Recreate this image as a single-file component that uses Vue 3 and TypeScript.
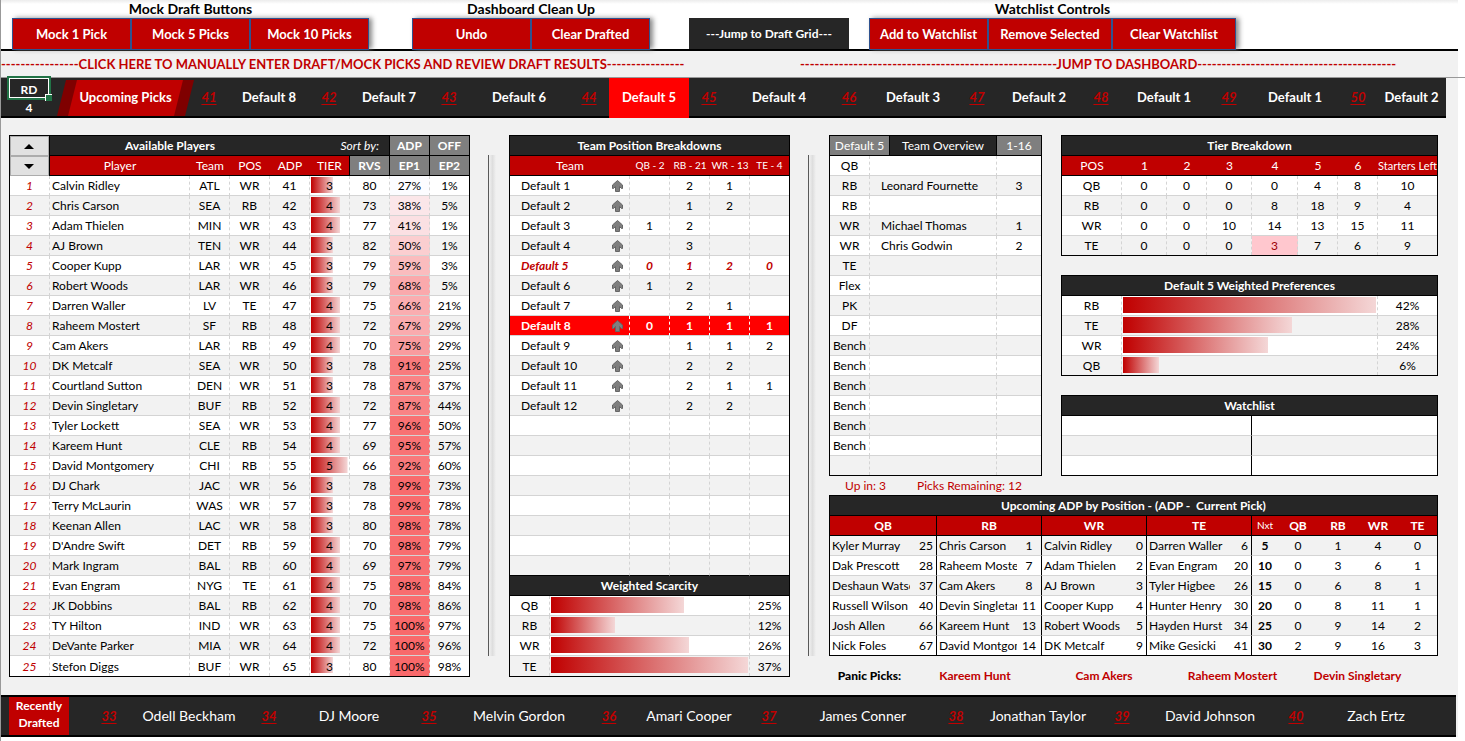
<script setup lang="ts">
import { computed, ref } from 'vue'

interface Player {
  name: string
  team: string
  pos: string
  tier: number
  rvs: number
  ep1: number
  ep2: number
}

interface Slot {
  label: string
  width: number
  kind: 'pick' | 'team' | 'gap'
  active?: boolean
}

interface Share {
  pos: string
  value: number
}

const p = (name: string, team: string, pos: string, tier: number, rvs: number, ep1: number, ep2: number): Player => ({
  name, team, pos, tier, rvs, ep1, ep2,
})

const firstAdp = 41
const players: Player[] = [
  p('Calvin Ridley', 'ATL', 'WR', 3, 80, 27, 1),
  p('Chris Carson', 'SEA', 'RB', 4, 73, 38, 5),
  p('Adam Thielen', 'MIN', 'WR', 4, 77, 41, 1),
  p('AJ Brown', 'TEN', 'WR', 3, 82, 50, 1),
  p('Cooper Kupp', 'LAR', 'WR', 3, 79, 59, 3),
  p('Robert Woods', 'LAR', 'WR', 3, 79, 68, 5),
  p('Darren Waller', 'LV', 'TE', 4, 75, 66, 21),
  p('Raheem Mostert', 'SF', 'RB', 4, 72, 67, 29),
  p('Cam Akers', 'LAR', 'RB', 4, 70, 75, 29),
  p('DK Metcalf', 'SEA', 'WR', 3, 78, 91, 25),
  p('Courtland Sutton', 'DEN', 'WR', 3, 78, 87, 37),
  p('Devin Singletary', 'BUF', 'RB', 4, 72, 87, 44),
  p('Tyler Lockett', 'SEA', 'WR', 4, 77, 96, 50),
  p('Kareem Hunt', 'CLE', 'RB', 4, 69, 95, 57),
  p('David Montgomery', 'CHI', 'RB', 5, 66, 92, 60),
  p('DJ Chark', 'JAC', 'WR', 3, 78, 99, 73),
  p('Terry McLaurin', 'WAS', 'WR', 3, 78, 99, 78),
  p('Keenan Allen', 'LAC', 'WR', 3, 80, 98, 78),
  p("D'Andre Swift", 'DET', 'RB', 4, 70, 98, 79),
  p('Mark Ingram', 'BAL', 'RB', 4, 69, 97, 79),
  p('Evan Engram', 'NYG', 'TE', 4, 75, 98, 84),
  p('JK Dobbins', 'BAL', 'RB', 4, 70, 98, 86),
  p('TY Hilton', 'IND', 'WR', 4, 75, 100, 97),
  p('DeVante Parker', 'MIA', 'WR', 4, 72, 100, 96),
  p('Stefon Diggs', 'BUF', 'WR', 3, 80, 100, 98),
]

const heat = (v: number): string => {
  const t = (v - 27) / 73
  const mix = (a: number, b: number) => Math.round(a + (b - a) * t)
  return `rgb(${mix(252, 248)}, ${mix(252, 105)}, ${mix(255, 107)})`
}

const breakdown: (string | number)[][] = [
  ['Default 1', '', 2, 1, ''],
  ['Default 2', '', 1, 2, ''],
  ['Default 3', 1, 2, '', ''],
  ['Default 4', '', 3, '', ''],
  ['Default 5', 0, 1, 2, 0],
  ['Default 6', 1, 2, '', ''],
  ['Default 7', '', 2, 1, ''],
  ['Default 8', 0, 1, 1, 1],
  ['Default 9', '', 1, 1, 2],
  ['Default 10', '', 2, 2, ''],
  ['Default 11', '', 2, 1, 1],
  ['Default 12', '', 2, 2, ''],
]
const onClock = ref('Default 5')
const selected = ref('Default 8')
const rowState = (name: string | number) => ({
  clock: name === onClock.value,
  selected: name === selected.value,
})

const scarcity: Share[] = [
  { pos: 'QB', value: 25 },
  { pos: 'RB', value: 12 },
  { pos: 'WR', value: 26 },
  { pos: 'TE', value: 37 },
]
const preferences: Share[] = [
  { pos: 'RB', value: 42 },
  { pos: 'TE', value: 28 },
  { pos: 'WR', value: 24 },
  { pos: 'QB', value: 6 },
]
const share = (list: Share[], v: number) => `${(v / Math.max(...list.map((s) => s.value))) * 100}%`

const roster: string[][] = [
  ['QB', '', ''],
  ['RB', 'Leonard Fournette', '3'],
  ['RB', '', ''],
  ['WR', 'Michael Thomas', '1'],
  ['WR', 'Chris Godwin', '2'],
  ['TE', '', ''],
  ['Flex', '', ''],
  ['PK', '', ''],
  ['DF', '', ''],
  ...Array.from({ length: 6 }, () => ['Bench', '', '']),
  ['', '', ''],
]

const tiers: (string | number)[][] = [
  ['QB', 0, 0, 0, 0, 4, 8, 10],
  ['RB', 0, 0, 0, 8, 18, 9, 4],
  ['WR', 0, 0, 10, 14, 13, 15, 11],
  ['TE', 0, 0, 0, 3, 7, 6, 9],
]

const upcoming: (string | number)[][] = [
  ['Kyler Murray', 25, 'Chris Carson', 1, 'Calvin Ridley', 0, 'Darren Waller', 6, 5, 0, 1, 4, 0],
  ['Dak Prescott', 28, 'Raheem Mostert', 7, 'Adam Thielen', 2, 'Evan Engram', 20, 10, 0, 3, 6, 1],
  ['Deshaun Watson', 37, 'Cam Akers', 8, 'AJ Brown', 3, 'Tyler Higbee', 26, 15, 0, 6, 8, 1],
  ['Russell Wilson', 40, 'Devin Singletary', 11, 'Cooper Kupp', 4, 'Hunter Henry', 30, 20, 0, 8, 11, 1],
  ['Josh Allen', 66, 'Kareem Hunt', 13, 'Robert Woods', 5, 'Hayden Hurst', 34, 25, 0, 9, 14, 2],
  ['Nick Foles', 67, 'David Montgomery', 14, 'DK Metcalf', 9, 'Mike Gesicki', 41, 30, 2, 9, 16, 3],
]
const adpClass = (i: number) => ({
  left: i < 8 && i % 2 === 0,
  num: i < 8 && i % 2 === 1 && i !== 3,
  edge: i < 8 && i % 2 === 1,
  nxt: i === 8,
})

const s = (label: string, width: number, kind: Slot['kind'], active = false): Slot => ({ label, width, kind, active })
const nextPicks: Slot[] = [
  s('41', 40, 'pick'), s('Default 8', 80, 'team'),
  s('42', 40, 'pick'), s('Default 7', 80, 'team'),
  s('43', 40, 'pick'), s('Default 6', 100, 'team'),
  s('44', 40, 'pick'), s('Default 5', 80, 'team', true),
  s('45', 40, 'pick'), s('Default 4', 100, 'team'),
  s('46', 40, 'pick'), s('Default 3', 88, 'team'),
  s('47', 40, 'pick'), s('Default 2', 84, 'team'),
  s('48', 40, 'pick'), s('Default 1', 86, 'team'),
  s('49', 44, 'pick'), s('Default 1', 88, 'team'),
  s('50', 38, 'pick'), s('Default 2', 69, 'team'),
]
const drafted: Slot[] = [
  s('', 20, 'gap'),
  s('33', 40, 'pick'), s('Odell Beckham', 120, 'team'),
  s('34', 40, 'pick'), s('DJ Moore', 120, 'team'),
  s('35', 40, 'pick'), s('Melvin Gordon', 140, 'team'),
  s('36', 40, 'pick'), s('Amari Cooper', 120, 'team'),
  s('37', 40, 'pick'), s('James Conner', 148, 'team'),
  s('38', 38, 'pick'), s('Jonathan Taylor', 126, 'team'),
  s('39', 42, 'pick'), s('David Johnson', 134, 'team'),
  s('40', 38, 'pick'), s('Zach Ertz', 122, 'team'),
  s('', 19, 'gap'),
]
const tracks = (slots: Slot[]) => slots.map((x) => `minmax(0, ${x.width}fr)`).join(' ')
const nextTracks = computed(() => tracks(nextPicks))
const draftedTracks = computed(() => tracks(drafted))

const cols = (widths: number[]) => {
  const total = widths.reduce((a, b) => a + b, 0)
  return widths.map((w) => `${(w / total) * 100}%`)
}
const playerCols = cols([40, 140, 40, 40, 40, 40, 40, 40, 39])
const teamCols = cols([95, 25, 40, 40, 40, 39])
const scarcityCols = cols([40, 200, 39])
const rosterCols = cols([40, 20, 107, 44])
const tierCols = cols([60, 45, 40, 45, 46, 40, 40, 59])
const prefCols = cols([60, 256, 59])
const watchCols = cols([190, 185])
const adpCols = cols([80, 27, 80, 25, 85, 20, 80, 25, 26, 40, 40, 40, 39])

const leftDashes = '-'.repeat(16)
const jumpLead = '-'.repeat(53)
const jumpTail = '-'.repeat(41)
</script>

<template>
  <div class="page">
    <header class="toolbar">
      <section class="group mock">
        <h2>Mock Draft Buttons</h2>
        <div class="buttons">
          <button type="button">Mock 1 Pick</button>
          <button type="button">Mock 5 Picks</button>
          <button type="button">Mock 10 Picks</button>
        </div>
      </section>
      <section class="group cleanup">
        <h2>Dashboard Clean Up</h2>
        <div class="buttons">
          <button type="button">Undo</button>
          <button type="button">Clear Drafted</button>
        </div>
      </section>
      <button type="button" class="jump">---Jump to Draft Grid---</button>
      <section class="group watch">
        <h2>Watchlist Controls</h2>
        <div class="buttons">
          <button type="button">Add to Watchlist</button>
          <button type="button">Remove Selected</button>
          <button type="button">Clear Watchlist</button>
        </div>
      </section>
    </header>

    <div class="sheet">
      <nav class="jumps">
        <a href="#draft">{{ leftDashes }}CLICK HERE TO MANUALLY ENTER DRAFT/MOCK PICKS AND REVIEW DRAFT RESULTS{{ leftDashes }}</a>
        <a href="#dashboard">{{ jumpLead }}JUMP TO DASHBOARD{{ jumpTail }}</a>
      </nav>

      <div class="freeze"></div>

      <section class="next">
        <div class="round">
          <span class="cursor">RD</span>
          <span class="number">4</span>
        </div>
        <h2 class="ribbon">
          <svg viewBox="0 0 137 36" preserveAspectRatio="none" aria-hidden="true">
            <polygon points="9,0 137,0 128,36 0,36" fill="#7f0000" />
            <polygon points="20,0 126,0 117,36 11,36" fill="#c00000" />
          </svg>
          <span>Upcoming Picks</span>
        </h2>
        <div class="slots" :style="{ gridTemplateColumns: nextTracks }">
          <template v-for="(slot, i) in nextPicks" :key="i">
            <a v-if="slot.kind === 'pick'" href="#draft" class="pick">{{ slot.label }}</a>
            <span v-else class="team" :class="{ active: slot.active }">{{ slot.label }}</span>
          </template>
        </div>
      </section>

      <main class="board">
        <table class="grid players">
          <colgroup><col v-for="(w, i) in playerCols" :key="i" :style="{ width: w }" /></colgroup>
          <thead>
            <tr class="title">
              <th class="spin">
                <button type="button" aria-label="Previous players">
                  <svg viewBox="0 0 10 5" aria-hidden="true"><polygon points="5,0 10,5 0,5" /></svg>
                </button>
              </th>
              <th colspan="4" class="name">Available Players</th>
              <th colspan="2" class="sortby">Sort by:</th>
              <th class="sort"><button type="button">ADP</button></th>
              <th class="sort"><button type="button">OFF</button></th>
            </tr>
            <tr class="heads">
              <th class="spin">
                <button type="button" aria-label="Next players">
                  <svg viewBox="0 0 10 5" aria-hidden="true"><polygon points="0,0 10,0 5,5" /></svg>
                </button>
              </th>
              <th>Player</th>
              <th>Team</th>
              <th>POS</th>
              <th>ADP</th>
              <th class="edge">TIER</th>
              <th class="sort"><button type="button">RVS</button></th>
              <th class="sort"><button type="button">EP1</button></th>
              <th class="sort"><button type="button">EP2</button></th>
            </tr>
          </thead>
          <tbody>
            <tr v-for="(row, i) in players" :key="row.name">
              <td class="rank">{{ i + 1 }}</td>
              <td class="left">{{ row.name }}</td>
              <td>{{ row.team }}</td>
              <td>{{ row.pos }}</td>
              <td>{{ firstAdp + i }}</td>
              <td class="tier" :style="{ backgroundSize: `${row.tier * 18.75}% 16px` }">{{ row.tier }}</td>
              <td>{{ row.rvs }}</td>
              <td class="heat" :style="{ backgroundColor: heat(row.ep1) }">{{ row.ep1 }}%</td>
              <td>{{ row.ep2 }}%</td>
            </tr>
          </tbody>
        </table>

        <div class="divider"></div>

        <div class="middle">
          <table class="grid teams">
            <colgroup><col v-for="(w, i) in teamCols" :key="i" :style="{ width: w }" /></colgroup>
            <thead>
              <tr class="title"><th colspan="6">Team Position Breakdowns</th></tr>
              <tr class="heads small">
                <th colspan="2" class="normal">Team</th>
                <th>QB - 2</th>
                <th>RB - 21</th>
                <th>WR - 13</th>
                <th>TE - 4</th>
              </tr>
            </thead>
            <tbody>
              <tr v-for="row in breakdown" :key="row[0]" :class="rowState(row[0])">
                <td class="left open">{{ row[0] }}</td>
                <td class="icon">
                  <svg viewBox="0 0 11 12" aria-hidden="true">
                    <path d="M5.5 0.5 L10.5 5 V8.5 H9.5 L7.5 6.5 V11.5 H3.5 V6.5 L1.5 8.5 H0.5 V5 Z" fill="#7f7f7f" stroke="#666" stroke-width="1" />
                  </svg>
                </td>
                <td>{{ row[1] }}</td>
                <td>{{ row[2] }}</td>
                <td>{{ row[3] }}</td>
                <td>{{ row[4] }}</td>
              </tr>
              <tr v-for="n in 8" :key="n">
                <td class="open"></td><td></td><td></td><td></td><td></td><td></td>
              </tr>
            </tbody>
          </table>
          <table class="grid scarcity">
            <colgroup><col v-for="(w, i) in scarcityCols" :key="i" :style="{ width: w }" /></colgroup>
            <thead><tr class="title"><th colspan="3">Weighted Scarcity</th></tr></thead>
            <tbody>
              <tr v-for="row in scarcity" :key="row.pos">
                <td>{{ row.pos }}</td>
                <td class="barcell"><div class="bar" :style="{ width: share(scarcity, row.value) }"></div></td>
                <td>{{ row.value }}%</td>
              </tr>
            </tbody>
          </table>
        </div>

        <div class="divider"></div>

        <div class="right">
          <div class="roster">
            <table class="grid">
              <colgroup><col v-for="(w, i) in rosterCols" :key="i" :style="{ width: w }" /></colgroup>
              <thead>
                <tr class="title light">
                  <th colspan="2" class="grey edge">Default 5</th>
                  <th class="edge">Team Overview</th>
                  <th class="grey">1-16</th>
                </tr>
              </thead>
              <tbody>
                <tr v-for="(row, i) in roster" :key="i">
                  <td>{{ row[0] }}</td>
                  <td colspan="2" class="left wide">{{ row[1] }}</td>
                  <td>{{ row[2] }}</td>
                </tr>
              </tbody>
            </table>
            <p class="status"><span>Up in: 3</span><span>Picks Remaining: 12</span></p>
          </div>

          <div class="stack">
            <table class="grid">
              <colgroup><col v-for="(w, i) in tierCols" :key="i" :style="{ width: w }" /></colgroup>
              <thead>
                <tr class="title"><th colspan="8">Tier Breakdown</th></tr>
                <tr class="heads">
                  <th>POS</th>
                  <th v-for="n in 6" :key="n">{{ n }}</th>
                  <th class="compact">Starters Left</th>
                </tr>
              </thead>
              <tbody>
                <tr v-for="row in tiers" :key="row[0]">
                  <td v-for="(cell, i) in row" :key="i" :class="{ alert: cell === 3 }">{{ cell }}</td>
                </tr>
              </tbody>
            </table>

            <table class="grid">
              <colgroup><col v-for="(w, i) in prefCols" :key="i" :style="{ width: w }" /></colgroup>
              <thead><tr class="title"><th colspan="3">Default 5 Weighted Preferences</th></tr></thead>
              <tbody>
                <tr v-for="row in preferences" :key="row.pos">
                  <td>{{ row.pos }}</td>
                  <td class="barcell"><div class="bar" :style="{ width: share(preferences, row.value) }"></div></td>
                  <td>{{ row.value }}%</td>
                </tr>
              </tbody>
            </table>

            <table class="grid watchlist">
              <colgroup><col v-for="(w, i) in watchCols" :key="i" :style="{ width: w }" /></colgroup>
              <thead><tr class="title"><th colspan="2">Watchlist</th></tr></thead>
              <tbody>
                <tr v-for="n in 3" :key="n"><td></td><td></td></tr>
              </tbody>
            </table>
          </div>

          <div class="adp">
            <table class="grid">
              <colgroup><col v-for="(w, i) in adpCols" :key="i" :style="{ width: w }" /></colgroup>
              <thead>
                <tr class="title"><th colspan="13">Upcoming ADP by Position - (ADP -&nbsp; Current Pick)</th></tr>
                <tr class="heads strong">
                  <th colspan="2" class="edge">QB</th>
                  <th colspan="2" class="edge">RB</th>
                  <th colspan="2" class="edge">WR</th>
                  <th colspan="2" class="edge">TE</th>
                  <th class="tiny">Nxt</th>
                  <th>QB</th>
                  <th>RB</th>
                  <th>WR</th>
                  <th>TE</th>
                </tr>
              </thead>
              <tbody>
                <tr v-for="row in upcoming" :key="row[0]">
                  <td v-for="(cell, i) in row" :key="i" :class="adpClass(i)">{{ cell }}</td>
                </tr>
              </tbody>
            </table>
            <div class="panic">
              <strong>Panic Picks:</strong>
              <span>Kareem Hunt</span>
              <span>Cam Akers</span>
              <span>Raheem Mostert</span>
              <span>Devin Singletary</span>
            </div>
          </div>
        </div>
      </main>

      <footer class="recent">
        <h2>Recently Drafted</h2>
        <div class="slots" :style="{ gridTemplateColumns: draftedTracks }">
          <template v-for="(slot, i) in drafted" :key="i">
            <a v-if="slot.kind === 'pick'" href="#draft" class="pick">{{ slot.label }}</a>
            <span v-else class="team">{{ slot.label }}</span>
          </template>
        </div>
      </footer>
    </div>
  </div>
</template>

<style>
body {
  margin: 0;
  background: #fff;
}
</style>

<style scoped>
.page {
  box-sizing: border-box;
  min-height: 100vh;
  font-family: Lato, 'Open Sans', sans-serif;
  font-size: 12px;
  color: #000;
  border-left: 1px solid #999;
  padding-right: 7px;
}

.page * {
  box-sizing: border-box;
}

h2,
p {
  margin: 0;
}

button {
  font-family: inherit;
  cursor: pointer;
}

/* Toolbar */
.toolbar {
  display: grid;
  grid-template-columns: 11fr 357fr 43fr 238fr 39fr 160fr 20fr 367fr 222fr;
  align-items: end;
  border-bottom: 2px solid #000;
  background: linear-gradient(#ececec, #fff 4px);
}

.group h2 {
  height: 18px;
  font-size: 14px;
  line-height: 18px;
  text-align: center;
}

.mock {
  grid-column: 2;
}

.cleanup {
  grid-column: 4;
}

.watch {
  grid-column: 8;
}

.buttons {
  display: flex;
  box-shadow: 3px 0 5px #888;
}

.buttons button {
  flex: 1 1 0;
  height: 32px;
  margin-bottom: -1px;
  padding: 0;
  border: 1px solid #2f528f;
  background: #c00000;
  color: #fff;
  font-size: 13px;
  font-weight: 700;
}

.watch button {
  flex-grow: 124;
}

.watch button:first-child {
  flex-grow: 119;
}

.jump {
  grid-column: 6;
  height: 31px;
  padding: 0;
  border: 0;
  background: #262626;
  color: #fff;
  font-size: 12px;
  font-weight: 700;
}

/* Sheet */
.sheet {
  background: #f1f1f1;
}

.jumps {
  display: grid;
  grid-template-columns: 799fr 658fr;
  height: 26px;
}

.jumps a {
  color: #c00000;
  font-size: 13px;
  font-weight: 700;
  line-height: 26px;
  text-decoration: none;
  white-space: nowrap;
}

.freeze {
  height: 1px;
  margin-right: -7px;
  background: #999;
}

.next {
  display: grid;
  grid-template-columns: 8fr 40fr 8fr 132fr 1257fr;
  margin-right: 12px;
  height: 40px;
  background: #262626;
  border-bottom: 2px solid #000;
}

.round {
  grid-column: 2;
  display: flex;
  flex-direction: column;
  color: #fff;
  font-size: 12px;
  font-weight: 700;
  text-align: center;
}

.cursor {
  position: relative;
  height: 20px;
  line-height: 18px;
  padding-top: 2px;
  border: 1px solid #fff;
  outline: 2px solid #217346;
}

.cursor::after {
  content: '';
  position: absolute;
  right: -4px;
  bottom: -4px;
  width: 6px;
  height: 6px;
  background: #217346;
  border-top: 1px solid #fff;
  border-left: 1px solid #fff;
}

.number {
  line-height: 20px;
}

.ribbon {
  grid-column: 4;
  display: grid;
  margin-right: -5px;
  color: #fff;
  font-size: 13px;
  text-align: center;
}

.ribbon svg {
  grid-area: 1 / 1;
  width: 100%;
  height: 36px;
  margin-top: 2px;
}

.ribbon span {
  grid-area: 1 / 1;
  z-index: 1;
  line-height: 38px;
}

.slots {
  display: grid;
  text-align: center;
  white-space: nowrap;
  line-height: 38px;
}

.pick {
  color: #c00000;
  font-size: 13px;
  font-style: italic;
  font-weight: 700;
  text-underline-offset: 2px;
}

.team {
  color: #fff;
  font-size: 14px;
}

.next .team {
  font-size: 13px;
  font-weight: 700;
}

.team.active {
  background: #f00;
}

/* Board */
.board {
  display: grid;
  grid-template-columns: 461fr 39fr 281fr 39fr 609fr;
  align-items: start;
  padding: 17px 20px 10px 8px;
}

.divider {
  align-self: start;
  width: 8px;
  height: 501px;
  margin: 20px 0 0 18px;
  border-left: 1px solid #595959;
  background: linear-gradient(90deg, #f1f1f1, #dedede 50%, #f1f1f1);
}

/* Tables */
.grid {
  width: 100%;
  table-layout: fixed;
  border-collapse: separate;
  border-spacing: 0;
  border: 1px solid #000;
  background: #fff;
}

.grid tr {
  height: 20px;
}

.grid th,
.grid td {
  height: 20px;
  padding: 0;
  overflow: hidden;
  border-bottom: 1px solid #d4d4d4;
  line-height: 19px;
  text-align: center;
  white-space: nowrap;
}

.grid td {
  border-right: 1px dashed #d4d4d4;
}

.grid td:last-child {
  border-right: 0;
}

.grid tbody tr:last-child td {
  border-bottom: 0;
}

.grid tbody tr:nth-child(even) {
  background: #f2f2f2;
}

.grid .left {
  padding-left: 2px;
  text-align: left;
}

.grid .open {
  border-right: 0;
}

.grid th {
  border-bottom-color: #000;
  color: #fff;
}

.title th {
  background: #262626;
  font-weight: 700;
}

.title.light th {
  font-weight: 400;
}

.heads th {
  background: #c00000;
  font-weight: 400;
}

.heads.small th {
  font-size: 10px;
}

.heads.small th.normal {
  font-size: 12px;
}

.heads.strong th {
  font-weight: 700;
}

.heads th.compact {
  font-size: 11px;
}

.heads th.tiny {
  font-size: 10px;
  font-weight: 400;
}

.grid th.grey {
  background: #7f7f7f;
}

.grid .edge {
  border-right: 1px solid #000;
}

.grid th.spin {
  border-right: 1px solid #000;
  border-bottom: 0;
  background: #e1e1e1;
}

.spin button {
  display: block;
  width: 100%;
  height: 20px;
  padding: 0;
  border: 1px solid #acacac;
  background: #e1e1e1;
}

.spin svg {
  display: block;
  width: 10px;
  height: 5px;
  margin: 0 auto;
}

.grid th.name {
  padding-right: 20px;
}

.grid th.sortby {
  padding-right: 10px;
  border-right: 1px solid #000;
  font-style: italic;
  font-weight: 400;
  text-align: right;
}

.grid th.sort {
  border-right: 1px solid #000;
  background: #7f7f7f;
}

.grid th.sort:last-child {
  border-right: 0;
}

.sort button {
  display: block;
  width: 100%;
  height: 19px;
  padding: 0;
  border: 0;
  background: #7f7f7f;
  color: #fff;
  font-size: 12px;
  font-weight: 700;
}

.rank {
  color: #c00000;
  font-style: italic;
}

.tier {
  background-image: linear-gradient(90deg, #c00000, #f4d7d7);
  background-repeat: no-repeat;
  background-position: 1px 1px;
}

.teams {
  border-bottom: 0;
}

.teams .left {
  padding-left: 11px;
}

.teams .icon svg {
  display: block;
  width: 11px;
  height: 12px;
  margin: 0 auto;
}

.teams tbody tr.clock td {
  color: #c00000;
  font-style: italic;
  font-weight: 700;
}

.teams tbody tr.selected td {
  background: #f00;
  border-right-color: #fff;
  color: #fff;
  font-weight: 700;
}

.teams tbody tr:last-child td {
  border-bottom: 1px solid #000;
}

.scarcity {
  border-top: 0;
}

.barcell .bar {
  height: 16px;
  background: linear-gradient(90deg, #c00000, #f4d7d7);
}

.grid .barcell {
  padding: 1px 1px 0;
  vertical-align: top;
}

.right {
  display: grid;
  grid-template-columns: 213fr 19fr 377fr;
}

.right tbody tr:last-child,
.right tbody tr:last-child td {
  height: 19px;
}

.stack {
  grid-column: 3;
  display: flex;
  flex-direction: column;
  gap: 19px;
}

.grid .wide {
  padding-left: 11px;
}

.alert {
  background: #ffc7ce;
  color: #9c0006;
}

.watchlist td:first-child {
  border-right: 1px solid #000;
}

.status {
  display: flex;
  gap: 31px;
  height: 19px;
  padding-left: 16px;
  color: #c00000;
  line-height: 20px;
  white-space: nowrap;
}

.adp {
  grid-column: 1 / -1;
}

.adp td {
  border-right: 0;
}

.adp tbody tr:nth-child(odd) {
  background: #f2f2f2;
}

.adp tbody tr:nth-child(even) {
  background: #fff;
}

.grid .num {
  padding-right: 3px;
  text-align: right;
}

.nxt {
  font-weight: 700;
}

.panic {
  display: grid;
  grid-template-columns: 81fr 130fr 128fr 129fr 121fr 20fr;
  margin-top: 11px;
  color: #c00000;
  font-weight: 700;
  line-height: 18px;
  text-align: center;
  white-space: nowrap;
}

.panic strong {
  color: #000;
}

/* Recently drafted */
.recent {
  display: grid;
  grid-template-columns: 8fr 60fr 1387fr;
  height: 42px;
  margin-right: 2px;
  border: solid #000;
  border-width: 2px 0;
  background: #262626;
}

.recent h2 {
  grid-column: 2;
  background: #c00000;
  color: #fff;
  font-size: 12px;
  line-height: 17px;
  text-align: center;
}
</style>
